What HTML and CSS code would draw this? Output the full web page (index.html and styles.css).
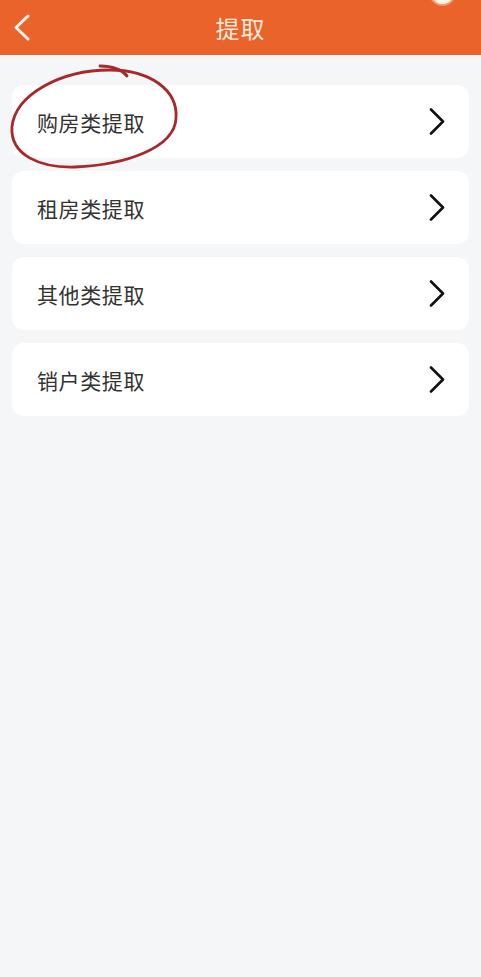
FILE: index.html
```html
<!DOCTYPE html>
<html lang="zh-CN">
<head>
<meta charset="utf-8">
<title>提取</title>
<link rel="stylesheet" href="styles.css">
</head>
<body>
<div class="page">
  <header class="topbar">
    <span class="back">
      <svg width="18" height="27" viewBox="0 0 18 27"><path d="M15 2 L3 13.5 L15 25" fill="none" stroke="#fff3ea" stroke-width="3" stroke-linecap="round" stroke-linejoin="round"/></svg>
    </span>
    <h1 class="title">提取</h1>
    <span class="corner-dot"></span>
  </header>
  <main class="list">
    <a class="item"><span class="label">购房类提取</span><svg class="chev" width="16" height="27" viewBox="0 0 16 27"><path d="M2 1.5 L14 13.5 L2 25.5" fill="none" stroke="#111" stroke-width="2.6" stroke-linecap="round" stroke-linejoin="round"/></svg></a>
    <a class="item"><span class="label">租房类提取</span><svg class="chev" width="16" height="27" viewBox="0 0 16 27"><path d="M2 1.5 L14 13.5 L2 25.5" fill="none" stroke="#111" stroke-width="2.6" stroke-linecap="round" stroke-linejoin="round"/></svg></a>
    <a class="item"><span class="label">其他类提取</span><svg class="chev" width="16" height="27" viewBox="0 0 16 27"><path d="M2 1.5 L14 13.5 L2 25.5" fill="none" stroke="#111" stroke-width="2.6" stroke-linecap="round" stroke-linejoin="round"/></svg></a>
    <a class="item"><span class="label">销户类提取</span><svg class="chev" width="16" height="27" viewBox="0 0 16 27"><path d="M2 1.5 L14 13.5 L2 25.5" fill="none" stroke="#111" stroke-width="2.6" stroke-linecap="round" stroke-linejoin="round"/></svg></a>
  </main>
  <svg class="mark" width="200" height="190" viewBox="0 0 200 190">
    <path d="M176 118 C178 90 150 70 110 70 C60 70 15 95 12 127 C10 155 40 168 75 167 C125 165 175 148 176 118" fill="none" stroke="#a8282c" stroke-width="2.8" stroke-linecap="round"/>
    <path d="M100 66 C112 66 122 70 127 76" fill="none" stroke="#a8282c" stroke-width="2.8" stroke-linecap="round"/>
  </svg>
</div>
</body>
</html>
```
FILE: styles.css
```css
* { box-sizing: border-box; }
html, body { margin: 0; padding: 0; }
body {
  background: #f5f6f8;
  font-family: "Noto Sans CJK SC", "Noto Sans", sans-serif;
  width: 481px;
  height: 977px;
  overflow: hidden;
}
.page { position: relative; min-height: 977px; }
.topbar {
  position: relative;
  height: 55px;
  background: #e9632b;
  display: flex;
  align-items: center;
  justify-content: center;
}
.back {
  position: absolute;
  left: 13px;
  top: 14px;
  display: flex;
}
.title {
  margin: 0;
  font-size: 24px;
  font-weight: 400;
  color: #fde9da;
  line-height: 1;
  letter-spacing: 1px;
}
.corner-dot {
  position: absolute;
  left: 429px;
  top: -21px;
  width: 27px;
  height: 27px;
  border-radius: 50%;
  background: #fff1e4;
  border: 2px solid #f59a6a;
}
.list {
  display: flex;
  flex-direction: column;
  gap: 13px;
  padding: 30px 12px 0 12px;
}
.item {
  height: 73px;
  background: #fff;
  border-radius: 12px;
  display: flex;
  align-items: center;
  justify-content: space-between;
  padding: 0 24px 0 25px;
}
.label {
  font-size: 21px;
  color: #333;
  letter-spacing: 0.6px;
}
.chev { display: block; }
.mark {
  position: absolute;
  left: 0;
  top: 0;
  pointer-events: none;
}
```
